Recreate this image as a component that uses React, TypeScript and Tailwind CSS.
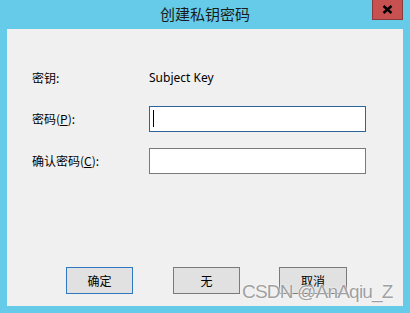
export default function App() {
  return (
    <div className="w-[410px] h-[313px] bg-[#65cbe9] flex flex-col relative overflow-hidden" style={{ fontFamily: '"Noto Sans", "Noto Sans CJK SC", sans-serif' }}>
      <div className="h-[29px] flex items-center justify-center relative">
        <span className="text-[15px] text-[#1b1b1b] leading-none -mt-[2px]" style={{ fontFamily: '"Noto Sans CJK SC", sans-serif' }}>创建私钥密码</span>
        <div className="absolute right-[7px] top-0 w-[31px] h-[20px] bg-[#c75050] border border-[#8a3a3a] border-t-0 flex items-center justify-center">
          <svg width="11" height="9" viewBox="0 0 11 9">
            <path d="M1.5 1 L9.5 8 M9.5 1 L1.5 8" stroke="#000" strokeWidth="2.4" />
          </svg>
        </div>
      </div>
      <div className="mx-[7px] mb-[7px] flex-1 bg-[#f0f0f0] flex flex-col text-[12px] text-[#000]">
        <div className="grid grid-cols-[117px_217px] pl-[25px] pt-[36px] items-center" style={{ fontFamily: '"Noto Sans CJK SC", sans-serif' }}>
          <div className="h-[26px] flex items-center">密钥:</div>
          <div className="h-[26px] flex items-center" style={{ fontFamily: '"Noto Sans", sans-serif' }}>Subject Key</div>
          <div className="mt-[15px] h-[26px] flex items-center">
            密码(<span className="underline">P</span>):
          </div>
          <div className="mt-[15px] h-[26px] bg-white border border-[#2d6499] relative">
            <div className="absolute left-[3px] top-[3px] w-[1px] h-[17px] bg-black" />
          </div>
          <div className="mt-[16px] h-[26px] flex items-center">
            确认密码(<span className="underline">C</span>):
          </div>
          <div className="mt-[16px] h-[26px] bg-white border border-[#7a7a7a]" />
        </div>
        <div className="mt-auto mb-[12px] flex pl-[59px]" style={{ fontFamily: '"Noto Sans CJK SC", sans-serif' }}>
          <button className="w-[67px] h-[27px] bg-[#e1e1e1] border border-[#2f78c0] text-[12px]">确定</button>
          <button className="ml-[40px] w-[67px] h-[27px] bg-[#e1e1e1] border border-[#7a7a7a] text-[12px]">无</button>
          <button className="ml-[39px] w-[68px] h-[27px] bg-[#e1e1e1] border border-[#7a7a7a] text-[12px]">取消</button>
        </div>
      </div>
      <div
        className="absolute left-[242px] top-[282px] text-[19px] leading-none tracking-[-0.8px] text-[#a0a0a0]"
        style={{ fontFamily: '"Liberation Sans", sans-serif', textShadow: '0 0 2px #fff, 0 0 1px #fff' }}
      >
        CSDN @AnAqiu_Z
      </div>
    </div>
  )
}
